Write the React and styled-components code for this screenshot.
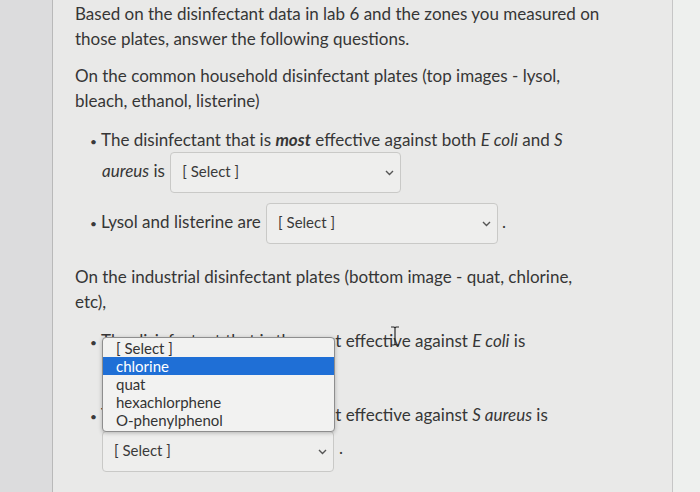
import React from 'react';
import styled, { createGlobalStyle } from 'styled-components';

const GlobalStyle = createGlobalStyle`
  html, body {
    margin: 0;
    padding: 0;
    background: #eceeec;
  }
  body {
    font-family: Lato, "Open Sans", sans-serif;
  }
`;

const Page = styled.div`
  display: flex;
  height: 492px;
  overflow: hidden;
  background: #eceeec;
`;

const Gutter = styled.div`
  width: ${p => (p.$fill ? 'auto' : '52px')};
  flex: ${p => (p.$fill ? 1 : 'none')};
  background: ${p => p.$bg || '#dcdcdd'};
`;

const Panel = styled.div`
  width: 621px;
  flex: none;
  box-sizing: border-box;
  border-left: 1px solid #b9b9b9;
  border-right: 1px solid #c6c6c6;
  background: #e9e9e8;
  padding: 1px 72px 0 22px;
  color: #363636;
  font-size: 17px;
  line-height: 25px;
`;

const Para = styled.p`
  margin: 0 0 ${p => p.$gap || 12}px;
`;

const List = styled.ul`
  margin: 0 0 ${p => p.$gap || 0}px;
  padding-left: 27px;
  list-style: none;
`;

const Item = styled.li`
  position: relative;
  margin-bottom: ${p => p.$gap || 0}px;

  &::before {
    content: '•';
    display: inline-block;
    width: 11px;
    margin-left: -12px;
    font-size: 12px;
    line-height: 1;
    color: #3a3a3a;
  }
`;

const SelectBox = styled.span`
  position: relative;
  display: inline-flex;
  align-items: center;
  justify-content: space-between;
  vertical-align: middle;
  box-sizing: border-box;
  width: ${p => p.$w || 231}px;
  height: 41px;
  margin: ${p => p.$mt || 0}px ${p => p.$mr || 0}px 0 ${p => p.$ml || 0}px;
  padding: 0 6px 0 11px;
  border: 1px solid #c9c9c7;
  border-radius: 4px;
  background: #eeeeed;
  font-size: 15px;
  line-height: 18px;
  color: #3a3a3a;
`;

const SelectLabel = styled.span`
  margin-top: -4px;
`;

const Chevron = () => (
  <svg width="9" height="6" viewBox="0 0 9 6">
    <polyline points="1,1 4.5,4.5 8,1" fill="none" stroke="#555" strokeWidth="1.4" />
  </svg>
);

const Dropdown = styled.div`
  position: absolute;
  left: -1px;
  top: -17px;
  width: 233px;
  box-sizing: border-box;
  padding: 1px 0 2px;
  border: 1px solid #8e8e8e;
  border-radius: 4px;
  background: #f2f2f1;
  box-shadow: 0 1px 4px rgba(0, 0, 0, 0.25);
  font-size: 15px;
  line-height: 18px;
  color: #343434;
  z-index: 2;
`;

const Option = styled.div`
  padding-left: 13px;
  background: ${p => (p.$active ? '#1f6fd6' : 'transparent')};
  color: ${p => (p.$active ? '#ffffff' : 'inherit')};
`;

const Cursor = styled.svg`
  position: absolute;
  left: 288px;
  top: -2px;
  z-index: 3;
`;

const Select = ({ w, ml, mr, mt, children }) => (
  <SelectBox $w={w} $ml={ml} $mr={mr} $mt={mt}>
    <SelectLabel>[ Select ]</SelectLabel>
    <Chevron />
    {children}
  </SelectBox>
);

const options = ['[ Select ]', 'chlorine', 'quat', 'hexachlorphene', 'O-phenylphenol'];

export default function App() {
  return (
    <Page>
      <GlobalStyle />
      <Gutter />
      <Panel>
        <Para $gap={12}>
          Based on the disinfectant data in lab 6 and the zones you measured on those plates,
          answer the following questions.
        </Para>
        <Para $gap={14}>
          On the common household disinfectant plates (top images - lysol, bleach, ethanol,
          listerine)
        </Para>
        <List $gap={20}>
          <Item $gap={10}>
            The disinfectant that is <b><i>most</i></b> effective against both <i>E coli</i> and{' '}
            <i>S</i> <i>aureus</i> is <Select w={231} ml={1} />
          </Item>
          <Item>
            Lysol and listerine are <Select w={232} ml={1} mr={4} />.
          </Item>
        </List>
        <Para $gap={14}>
          On the industrial disinfectant plates (bottom image - quat, chlorine, etc),
        </Para>
        <List>
          <Item $gap={8}>
            The disinfectant that is the most effective against <i>E coli</i> is
            <Cursor width="10" height="20" viewBox="0 0 10 20">
              <path d="M1 1h3l1 1 1-1h3M5 2v16M1 19h3l1-1 1 1h3" fill="none" stroke="#2a2a2a" strokeWidth="1.2" />
            </Cursor>{' '}
            <Select w={232}>
              <Dropdown>
                {options.map((o, i) => (
                  <Option key={o} $active={i === 1}>{o}</Option>
                ))}
              </Dropdown>
            </Select>
          </Item>
          <Item>
            The disinfectant that is the most effective against <i>S aureus</i> is{' '}
            <Select w={232} mr={5} mt={4} />.
          </Item>
        </List>
      </Panel>
      <Gutter $fill $bg="#eef0ee" />
    </Page>
  );
}
